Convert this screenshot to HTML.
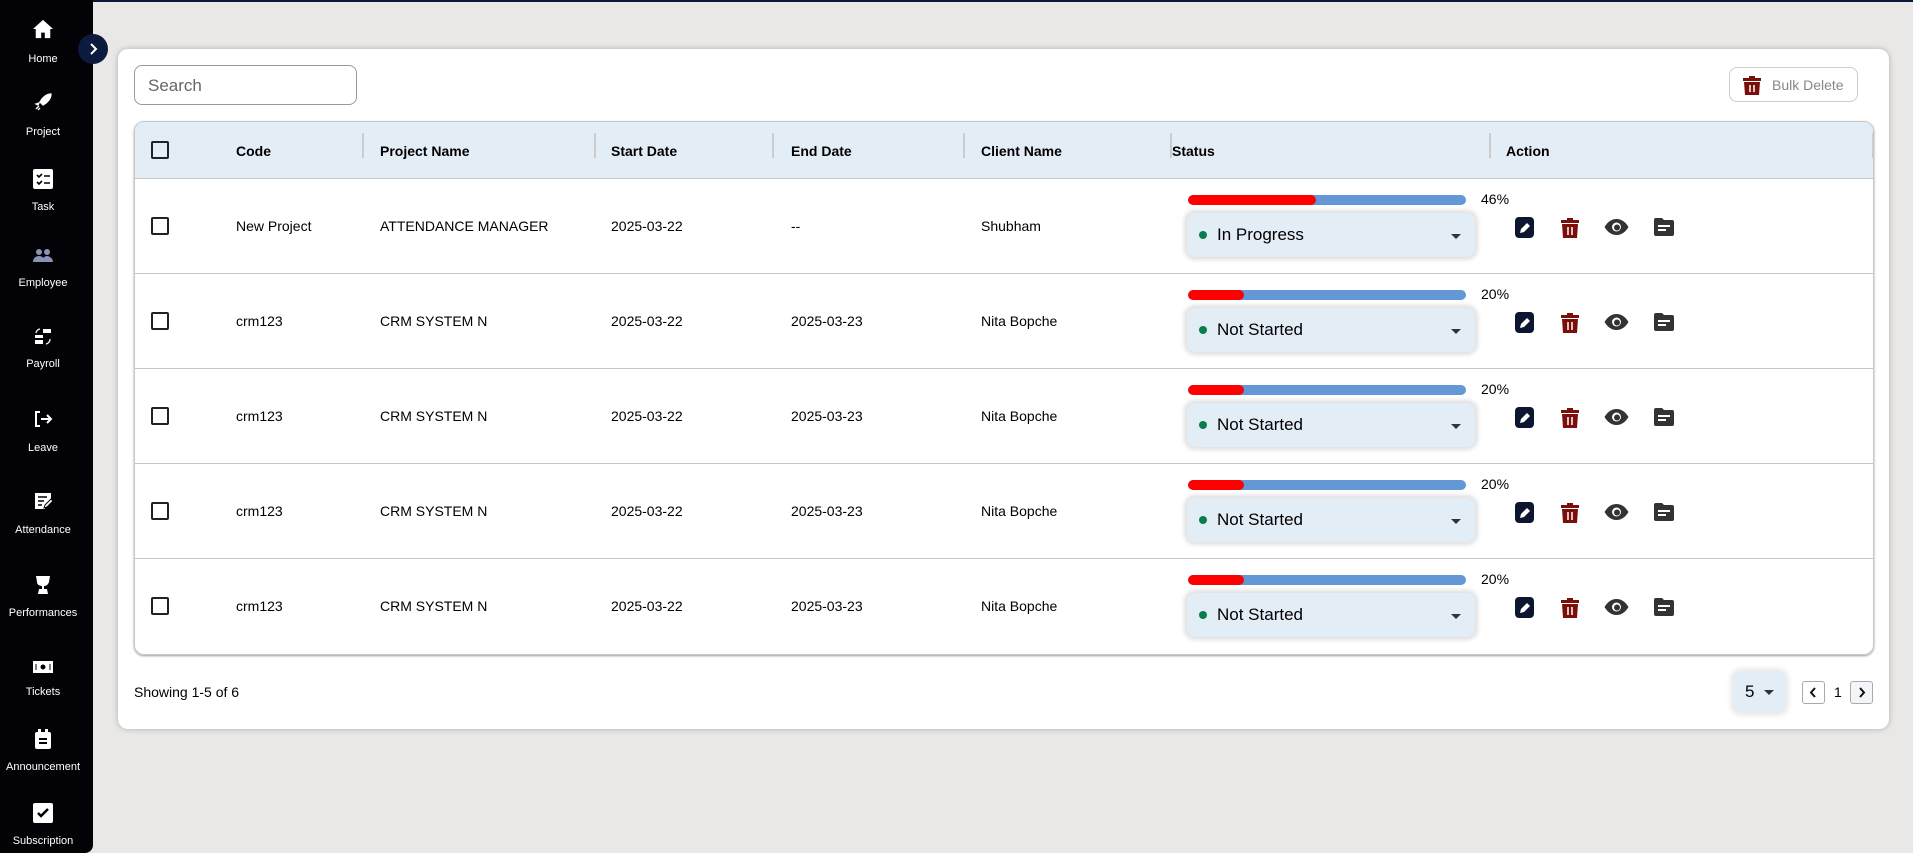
<!DOCTYPE html>
<html><head><meta charset="utf-8"><style>
*{box-sizing:border-box;margin:0;padding:0}
body{width:1913px;height:853px;background:#e9e8e6;font-family:"Liberation Sans",sans-serif;position:relative;overflow:hidden;color:#000}
.topline{position:absolute;left:0;top:0;width:1913px;height:2px;background:#0b1a3a}
.sb{position:absolute;left:0;top:0;width:93px;height:853px;background:#020207;border-bottom-right-radius:8px}
.it{position:absolute;left:0;width:86px;text-align:center;color:#fff;font-size:11px}
.it svg{display:block;margin:0 auto}
.tog{position:absolute;left:78px;top:34px;width:30px;height:30px;border-radius:50%;background:#0c1a3d;color:#fff;text-align:center}
.card{position:absolute;left:118px;top:49px;width:1771px;height:680px;background:#fff;border-radius:10px;box-shadow:0 0 6px rgba(0,0,0,.25)}
.search{position:absolute;left:134px;top:65px;width:223px;height:40px;border:1px solid #999;border-radius:8px;font-size:17px;color:#666;padding:10px 13px}
.bulk{position:absolute;left:1729px;top:67px;width:129px;height:35px;border:1px solid #ccc;border-radius:8px;color:#888;font-size:14px;padding:9px 0 0 42px}
.tbl{position:absolute;left:134px;top:121px;width:1740px;height:534px;border:1px solid #c8c8c8;border-radius:10px;overflow:hidden;box-shadow:0 1px 2px rgba(0,0,0,.4)}
.hd{position:absolute;left:0;top:0;width:1740px;height:57px;background:#e3edf6;border-bottom:1px solid #c8c8c8}
.t{position:absolute;font-size:14px;white-space:nowrap}
.b{font-weight:bold}
.dv{position:absolute;top:11px;width:2px;height:25px;background:#ccc}
.row{position:absolute;left:0;width:1740px;height:95px;border-bottom:1px solid #c8c8c8}
.cb{position:absolute;left:16px;width:18px;height:18px;border:2px solid #222;border-radius:2px}
.bar{position:absolute;left:1053px;width:278px;height:10px;border-radius:5px;background:#6397d5;overflow:hidden}
.bar i{display:block;height:10px;background:#f00;border-radius:5px}
.dd{position:absolute;left:1052px;width:288px;height:44px;background:#e3edf6;border-radius:8px;box-shadow:0 0 4px 3px rgba(0,0,0,.12);font-size:17px;padding:12px 0 0 30px}
.dd:before{content:"";position:absolute;left:12px;top:18px;width:8px;height:8px;border-radius:50%;background:#0a7d4e}
.dd:after{content:"";position:absolute;right:14px;top:21px;border:5px solid transparent;border-top:5px solid #333}
.ic{position:absolute}
</style></head><body>
<div class="topline"></div>
<div class="sb">
<div class="it" style="top:19px"><svg width="22" height="20" viewBox="0 0 24 22"><path d="M12 1L1 11h3v10h6v-6h4v6h6V11h3z" fill="#fff"/></svg><div style="margin-top:14px">Home</div></div>
<div class="it" style="top:92px"><svg width="20" height="20" viewBox="0 0 20 20"><path d="M18 2c-5 0-9 4-11 8l3 3c4-2 8-6 8-11zM6 11l-3 1 2 1zM3 17l3-3M5 18l2-2" stroke="#fff" fill="#fff" stroke-width="1.3"/></svg><div style="margin-top:14px">Project</div></div>
<div class="it" style="top:169px"><svg width="20" height="20" viewBox="0 0 20 20"><rect width="20" height="20" rx="2" fill="#fff"/><path d="M4 6l2 2 3-3M4 13l2 2 3-3M11 7h6M11 14h6" stroke="#000" stroke-width="1.6" fill="none"/></svg><div style="margin-top:12px">Task</div></div>
<div class="it" style="top:248px"><svg width="20" height="16" viewBox="0 0 20 16"><circle cx="6" cy="4" r="3" fill="#8a93b5"/><circle cx="14" cy="4" r="3" fill="#8a93b5"/><path d="M0 14c0-4 3-6 6-6s6 2 6 6zM9 14c0-4 3-6 5-6s6 2 6 6z" fill="#8a93b5"/></svg><div style="margin-top:13px">Employee</div></div>
<div class="it" style="top:327px"><svg width="20" height="20" viewBox="0 0 20 20"><rect x="10" y="2" width="8" height="4" fill="#fff"/><rect x="2" y="13" width="8" height="4" fill="#fff"/><rect x="2" y="8" width="8" height="3" fill="#fff"/><path d="M3 6a5 5 0 0 1 4-4M17 12a5 5 0 0 1-4 5" stroke="#fff" fill="none" stroke-width="1.3"/></svg><div style="margin-top:11px">Payroll</div></div>
<div class="it" style="top:409px"><svg width="20" height="20" viewBox="0 0 20 20"><path d="M7 3H3v14h4M8 10h10M14 6l4 4-4 4" stroke="#fff" stroke-width="2" fill="none"/></svg><div style="margin-top:13px">Leave</div></div>
<div class="it" style="top:492px"><svg width="18" height="18" viewBox="0 0 18 18"><path d="M1 1h16v8l-6 6v2H1z" fill="#fff"/><path d="M4 5h9M4 9h6M4 13h4" stroke="#000" stroke-width="1.5"/><path d="M10 16l1-3 6-6 2 2-6 6z" fill="#fff" stroke="#000"/></svg><div style="margin-top:14px">Attendance</div></div>
<div class="it" style="top:575px"><svg width="20" height="20" viewBox="0 0 20 20"><path d="M3 1h14l-1 6c-1 3-3 4-5 4v3h3l1 5H5l1-5h3v-3C7 11 4 10 4 7z" fill="#fff"/></svg><div style="margin-top:12px">Performances</div></div>
<div class="it" style="top:659px"><svg width="22" height="16" viewBox="0 0 22 16"><rect x="1" y="2" width="20" height="12" fill="#fff"/><circle cx="11" cy="8" r="2.5" fill="#000"/><path d="M4 5v6M18 5v6" stroke="#000"/></svg><div style="margin-top:11px">Tickets</div></div>
<div class="it" style="top:729px"><svg width="18" height="20" viewBox="0 0 18 20"><rect x="1" y="3" width="16" height="17" rx="2" fill="#fff"/><rect x="4" y="0" width="3" height="4" fill="#fff"/><rect x="11" y="0" width="3" height="4" fill="#fff"/><path d="M5 10h8M5 14h8" stroke="#000" stroke-width="2"/></svg><div style="margin-top:12px">Announcement</div></div>
<div class="it" style="top:803px"><svg width="20" height="20" viewBox="0 0 20 20"><rect width="20" height="20" rx="2" fill="#fff"/><path d="M5 10l3 3 7-7" stroke="#000" stroke-width="2.5" fill="none"/></svg><div style="margin-top:12px">Subscription</div></div>
</div>
<div class="tog"><svg width="30" height="30" viewBox="0 0 30 30"><path d="M13 10l5 5-5 5" stroke="#fff" stroke-width="2" fill="none"/></svg></div>
<div class="card"></div>
<div class="search">Search</div>
<div class="bulk"><svg style="position:absolute;left:12px;top:7px" width="20" height="20" viewBox="0 0 20 20"><path d="M7 1h6v2h6v3H1V3h6z" fill="#7a0e0a"/><path d="M2 7h16l-1 13H3z" fill="#7a0e0a"/><path d="M8 10v7M12 10v7" stroke="#fff" stroke-width="1.5"/></svg>Bulk Delete</div>
<div class="tbl">
<div class="hd">
<div class="cb" style="top:19px"></div>
<div class="t b" style="left:101px;top:21px">Code</div>
<div class="dv" style="left:227px"></div>
<div class="t b" style="left:245px;top:21px">Project Name</div>
<div class="dv" style="left:459px"></div>
<div class="t b" style="left:476px;top:21px">Start Date</div>
<div class="dv" style="left:637px"></div>
<div class="t b" style="left:656px;top:21px">End Date</div>
<div class="dv" style="left:828px"></div>
<div class="t b" style="left:846px;top:21px">Client Name</div>
<div class="dv" style="left:1035px"></div>
<div class="t b" style="left:1037px;top:21px">Status</div>
<div class="dv" style="left:1354px"></div>
<div class="t b" style="left:1371px;top:21px">Action</div>
<div class="dv" style="left:1737px;top:11px"></div>
</div>
<div class="row" style="top:57px"><div class="cb" style="top:38px"></div><div class="t" style="left:101px;top:39px">New Project</div><div class="t" style="left:245px;top:39px">ATTENDANCE MANAGER</div><div class="t" style="left:476px;top:39px">2025-03-22</div><div class="t" style="left:656px;top:39px">--</div><div class="t" style="left:846px;top:39px">Shubham</div><div class="bar" style="top:16px"><i style="width:46%"></i></div><div class="t" style="left:1346px;top:12px">46%</div><div class="dd" style="top:34px">In Progress</div>
<svg class="ic" style="left:1380px;top:38px" width="19" height="21" viewBox="0 0 19 21"><rect width="19" height="21" rx="4" fill="#0c1631"/><path d="M5 16l1-4 6-6 3 3-6 6z" fill="#fff"/></svg>
<svg class="ic" style="left:1425px;top:38px" width="20" height="21" viewBox="0 0 20 21"><path d="M7 1h6v2h6v3H1V3h6z" fill="#7a0e0a"/><path d="M2 7h16l-1 14H3z" fill="#7a0e0a"/><path d="M8 10v8M12 10v8" stroke="#fff" stroke-width="1.5"/></svg>
<svg class="ic" style="left:1469px;top:40px" width="25" height="16" viewBox="0 0 24 16"><path d="M0 8c3-5 7-8 12-8s9 3 12 8c-3 5-7 8-12 8S3 13 0 8z" fill="#333"/><circle cx="12" cy="8" r="4.5" fill="#fff"/><circle cx="12.5" cy="8.5" r="3" fill="#333"/></svg>
<svg class="ic" style="left:1519px;top:39px" width="20" height="18" viewBox="0 0 20 18"><path d="M0 2a2 2 0 0 1 2-2h6l2 2h8a2 2 0 0 1 2 2v12a2 2 0 0 1-2 2H2a2 2 0 0 1-2-2z" fill="#333"/><path d="M4 8h12M4 12h8" stroke="#fff" stroke-width="2"/></svg>
</div>
<div class="row" style="top:152px"><div class="cb" style="top:38px"></div><div class="t" style="left:101px;top:39px">crm123</div><div class="t" style="left:245px;top:39px">CRM SYSTEM N</div><div class="t" style="left:476px;top:39px">2025-03-22</div><div class="t" style="left:656px;top:39px">2025-03-23</div><div class="t" style="left:846px;top:39px">Nita Bopche</div><div class="bar" style="top:16px"><i style="width:20%"></i></div><div class="t" style="left:1346px;top:12px">20%</div><div class="dd" style="top:34px">Not Started</div>
<svg class="ic" style="left:1380px;top:38px" width="19" height="21" viewBox="0 0 19 21"><rect width="19" height="21" rx="4" fill="#0c1631"/><path d="M5 16l1-4 6-6 3 3-6 6z" fill="#fff"/></svg>
<svg class="ic" style="left:1425px;top:38px" width="20" height="21" viewBox="0 0 20 21"><path d="M7 1h6v2h6v3H1V3h6z" fill="#7a0e0a"/><path d="M2 7h16l-1 14H3z" fill="#7a0e0a"/><path d="M8 10v8M12 10v8" stroke="#fff" stroke-width="1.5"/></svg>
<svg class="ic" style="left:1469px;top:40px" width="25" height="16" viewBox="0 0 24 16"><path d="M0 8c3-5 7-8 12-8s9 3 12 8c-3 5-7 8-12 8S3 13 0 8z" fill="#333"/><circle cx="12" cy="8" r="4.5" fill="#fff"/><circle cx="12.5" cy="8.5" r="3" fill="#333"/></svg>
<svg class="ic" style="left:1519px;top:39px" width="20" height="18" viewBox="0 0 20 18"><path d="M0 2a2 2 0 0 1 2-2h6l2 2h8a2 2 0 0 1 2 2v12a2 2 0 0 1-2 2H2a2 2 0 0 1-2-2z" fill="#333"/><path d="M4 8h12M4 12h8" stroke="#fff" stroke-width="2"/></svg>
</div>
<div class="row" style="top:247px"><div class="cb" style="top:38px"></div><div class="t" style="left:101px;top:39px">crm123</div><div class="t" style="left:245px;top:39px">CRM SYSTEM N</div><div class="t" style="left:476px;top:39px">2025-03-22</div><div class="t" style="left:656px;top:39px">2025-03-23</div><div class="t" style="left:846px;top:39px">Nita Bopche</div><div class="bar" style="top:16px"><i style="width:20%"></i></div><div class="t" style="left:1346px;top:12px">20%</div><div class="dd" style="top:34px">Not Started</div>
<svg class="ic" style="left:1380px;top:38px" width="19" height="21" viewBox="0 0 19 21"><rect width="19" height="21" rx="4" fill="#0c1631"/><path d="M5 16l1-4 6-6 3 3-6 6z" fill="#fff"/></svg>
<svg class="ic" style="left:1425px;top:38px" width="20" height="21" viewBox="0 0 20 21"><path d="M7 1h6v2h6v3H1V3h6z" fill="#7a0e0a"/><path d="M2 7h16l-1 14H3z" fill="#7a0e0a"/><path d="M8 10v8M12 10v8" stroke="#fff" stroke-width="1.5"/></svg>
<svg class="ic" style="left:1469px;top:40px" width="25" height="16" viewBox="0 0 24 16"><path d="M0 8c3-5 7-8 12-8s9 3 12 8c-3 5-7 8-12 8S3 13 0 8z" fill="#333"/><circle cx="12" cy="8" r="4.5" fill="#fff"/><circle cx="12.5" cy="8.5" r="3" fill="#333"/></svg>
<svg class="ic" style="left:1519px;top:39px" width="20" height="18" viewBox="0 0 20 18"><path d="M0 2a2 2 0 0 1 2-2h6l2 2h8a2 2 0 0 1 2 2v12a2 2 0 0 1-2 2H2a2 2 0 0 1-2-2z" fill="#333"/><path d="M4 8h12M4 12h8" stroke="#fff" stroke-width="2"/></svg>
</div>
<div class="row" style="top:342px"><div class="cb" style="top:38px"></div><div class="t" style="left:101px;top:39px">crm123</div><div class="t" style="left:245px;top:39px">CRM SYSTEM N</div><div class="t" style="left:476px;top:39px">2025-03-22</div><div class="t" style="left:656px;top:39px">2025-03-23</div><div class="t" style="left:846px;top:39px">Nita Bopche</div><div class="bar" style="top:16px"><i style="width:20%"></i></div><div class="t" style="left:1346px;top:12px">20%</div><div class="dd" style="top:34px">Not Started</div>
<svg class="ic" style="left:1380px;top:38px" width="19" height="21" viewBox="0 0 19 21"><rect width="19" height="21" rx="4" fill="#0c1631"/><path d="M5 16l1-4 6-6 3 3-6 6z" fill="#fff"/></svg>
<svg class="ic" style="left:1425px;top:38px" width="20" height="21" viewBox="0 0 20 21"><path d="M7 1h6v2h6v3H1V3h6z" fill="#7a0e0a"/><path d="M2 7h16l-1 14H3z" fill="#7a0e0a"/><path d="M8 10v8M12 10v8" stroke="#fff" stroke-width="1.5"/></svg>
<svg class="ic" style="left:1469px;top:40px" width="25" height="16" viewBox="0 0 24 16"><path d="M0 8c3-5 7-8 12-8s9 3 12 8c-3 5-7 8-12 8S3 13 0 8z" fill="#333"/><circle cx="12" cy="8" r="4.5" fill="#fff"/><circle cx="12.5" cy="8.5" r="3" fill="#333"/></svg>
<svg class="ic" style="left:1519px;top:39px" width="20" height="18" viewBox="0 0 20 18"><path d="M0 2a2 2 0 0 1 2-2h6l2 2h8a2 2 0 0 1 2 2v12a2 2 0 0 1-2 2H2a2 2 0 0 1-2-2z" fill="#333"/><path d="M4 8h12M4 12h8" stroke="#fff" stroke-width="2"/></svg>
</div>
<div class="row" style="top:437px;border-bottom:none"><div class="cb" style="top:38px"></div><div class="t" style="left:101px;top:39px">crm123</div><div class="t" style="left:245px;top:39px">CRM SYSTEM N</div><div class="t" style="left:476px;top:39px">2025-03-22</div><div class="t" style="left:656px;top:39px">2025-03-23</div><div class="t" style="left:846px;top:39px">Nita Bopche</div><div class="bar" style="top:16px"><i style="width:20%"></i></div><div class="t" style="left:1346px;top:12px">20%</div><div class="dd" style="top:34px">Not Started</div>
<svg class="ic" style="left:1380px;top:38px" width="19" height="21" viewBox="0 0 19 21"><rect width="19" height="21" rx="4" fill="#0c1631"/><path d="M5 16l1-4 6-6 3 3-6 6z" fill="#fff"/></svg>
<svg class="ic" style="left:1425px;top:38px" width="20" height="21" viewBox="0 0 20 21"><path d="M7 1h6v2h6v3H1V3h6z" fill="#7a0e0a"/><path d="M2 7h16l-1 14H3z" fill="#7a0e0a"/><path d="M8 10v8M12 10v8" stroke="#fff" stroke-width="1.5"/></svg>
<svg class="ic" style="left:1469px;top:40px" width="25" height="16" viewBox="0 0 24 16"><path d="M0 8c3-5 7-8 12-8s9 3 12 8c-3 5-7 8-12 8S3 13 0 8z" fill="#333"/><circle cx="12" cy="8" r="4.5" fill="#fff"/><circle cx="12.5" cy="8.5" r="3" fill="#333"/></svg>
<svg class="ic" style="left:1519px;top:39px" width="20" height="18" viewBox="0 0 20 18"><path d="M0 2a2 2 0 0 1 2-2h6l2 2h8a2 2 0 0 1 2 2v12a2 2 0 0 1-2 2H2a2 2 0 0 1-2-2z" fill="#333"/><path d="M4 8h12M4 12h8" stroke="#fff" stroke-width="2"/></svg>
</div>
</div>
<div class="t" style="left:134px;top:684px">Showing 1-5 of 6</div>
<div style="position:absolute;left:1733px;top:671px;width:53px;height:42px;background:#e3edf6;border-radius:8px;box-shadow:0 0 4px 3px rgba(0,0,0,.08);font-size:17px;padding:11px 0 0 12px">5<span style="position:absolute;left:31px;top:19px;border:5px solid transparent;border-top:5px solid #333"></span></div>
<div style="position:absolute;left:1802px;top:681px;width:23px;height:23px;border:1px solid #aaa;border-radius:3px"><svg width="21" height="21" viewBox="0 0 21 21"><path d="M12 6l-4 4.5 4 4.5" stroke="#111" stroke-width="2" fill="none"/></svg></div>
<div class="t" style="left:1834px;top:684px">1</div>
<div style="position:absolute;left:1850px;top:681px;width:23px;height:23px;border:1px solid #aaa;border-radius:3px;background:#f3f5f9"><svg width="21" height="21" viewBox="0 0 21 21"><path d="M9 6l4 4.5-4 4.5" stroke="#111" stroke-width="2" fill="none"/></svg></div>
</body></html>
